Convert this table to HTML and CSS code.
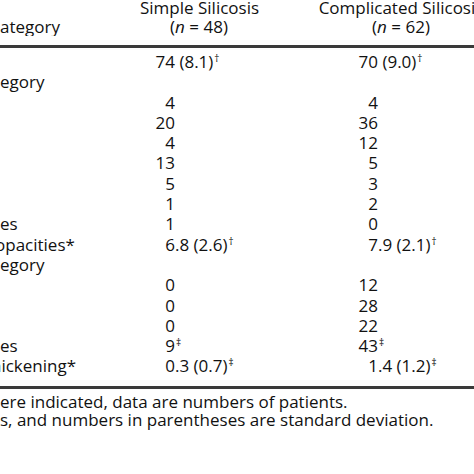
FILE: index.html
```html
<!DOCTYPE html>
<html>
<head>
<meta charset="utf-8">
<link rel="stylesheet" href="styles.css">
</head>
<body>
<div class="page">
  <div class="head">
    <div class="row">
      <div class="lab"></div>
      <div class="hc">Simple Silicosis</div>
      <div class="hc">Complicated Silicosis</div>
    </div>
    <div class="row">
      <div class="lab">ategory</div>
      <div class="hc">(<i>n</i> = 48)</div>
      <div class="hc">(<i>n</i> = 62)</div>
    </div>
  </div>
  <div class="body">
    <div class="row"><div class="lab"></div><div class="c2"><span class="int">74</span> (8.1)<span class="sup">†</span></div><div class="c3"><span class="int">70</span> (9.0)<span class="sup">†</span></div></div>
    <div class="row"><div class="lab">egory</div><div class="c2"></div><div class="c3"></div></div>
    <div class="row"><div class="lab"></div><div class="c2"><span class="int">4</span></div><div class="c3"><span class="int">4</span></div></div>
    <div class="row"><div class="lab"></div><div class="c2"><span class="int">20</span></div><div class="c3"><span class="int">36</span></div></div>
    <div class="row"><div class="lab"></div><div class="c2"><span class="int">4</span></div><div class="c3"><span class="int">12</span></div></div>
    <div class="row"><div class="lab"></div><div class="c2"><span class="int">13</span></div><div class="c3"><span class="int">5</span></div></div>
    <div class="row"><div class="lab"></div><div class="c2"><span class="int">5</span></div><div class="c3"><span class="int">3</span></div></div>
    <div class="row"><div class="lab"></div><div class="c2"><span class="int">1</span></div><div class="c3"><span class="int">2</span></div></div>
    <div class="row"><div class="lab">es</div><div class="c2"><span class="int">1</span></div><div class="c3"><span class="int">0</span></div></div>
    <div class="row"><div class="lab"><span class="cut-o">opacities*</span></div><div class="c2"><span class="int">6</span>.8 (2.6)<span class="sup">†</span></div><div class="c3"><span class="int">7</span>.9 (2.1)<span class="sup">†</span></div></div>
    <div class="row"><div class="lab">egory</div><div class="c2"></div><div class="c3"></div></div>
    <div class="row"><div class="lab"></div><div class="c2"><span class="int">0</span></div><div class="c3"><span class="int">12</span></div></div>
    <div class="row"><div class="lab"></div><div class="c2"><span class="int">0</span></div><div class="c3"><span class="int">28</span></div></div>
    <div class="row"><div class="lab"></div><div class="c2"><span class="int">0</span></div><div class="c3"><span class="int">22</span></div></div>
    <div class="row"><div class="lab">es</div><div class="c2"><span class="int">9</span><span class="sup">‡</span></div><div class="c3"><span class="int">43</span><span class="sup">‡</span></div></div>
    <div class="row"><div class="lab"><span class="cut-h">hickening*</span></div><div class="c2"><span class="int">0</span>.3 (0.7)<span class="sup">‡</span></div><div class="c3"><span class="int">1</span>.4 (1.2)<span class="sup">‡</span></div></div>
  </div>
  <div class="notes">
    <p class="note">ere indicated, data are numbers of patients.</p>
    <p class="note">s, and numbers in parentheses are standard deviation.</p>
  </div>
</div>
</body>
</html>
```

FILE: styles.css
```css
html, body {
  margin: 0;
  padding: 0;
  overflow: hidden;
  background: #ffffff;
}
.page {
  width: 560px;
  font-family: "Open Sans", "Liberation Sans", sans-serif;
  font-size: 17px;
  color: #111111;
}
.head {
  margin-top: -2px;
  padding-bottom: 9px;
  border-bottom: 3px solid #3a3a3a;
}
.row {
  display: grid;
  grid-template-columns: 140px 118px 286px;
  height: 20.3px;
  line-height: 20.3px;
  white-space: nowrap;
}
.head .row {
  height: 19px;
  line-height: 19px;
}
.hc {
  text-align: center;
}
.lab {
  overflow: hidden;
}
.body {
  padding-top: 4px;
  padding-bottom: 9px;
  border-bottom: 3px solid #3a3a3a;
}
.c2 {
  padding-left: 5px;
}
.c3 {
  padding-left: 90px;
}
.int {
  display: inline-block;
  width: 30px;
  text-align: right;
}
.sup {
  font-size: 10px;
  vertical-align: 6px;
  line-height: 0;
  margin-left: 1px;
}
.cut-o {
  display: inline-block;
  margin-left: -5px;
}
.cut-h {
  display: inline-block;
  margin-left: -9px;
}
.notes {
  padding-top: 4px;
}
.note {
  margin: 0;
  line-height: 18.5px;
  font-size: 17px;
}
```
